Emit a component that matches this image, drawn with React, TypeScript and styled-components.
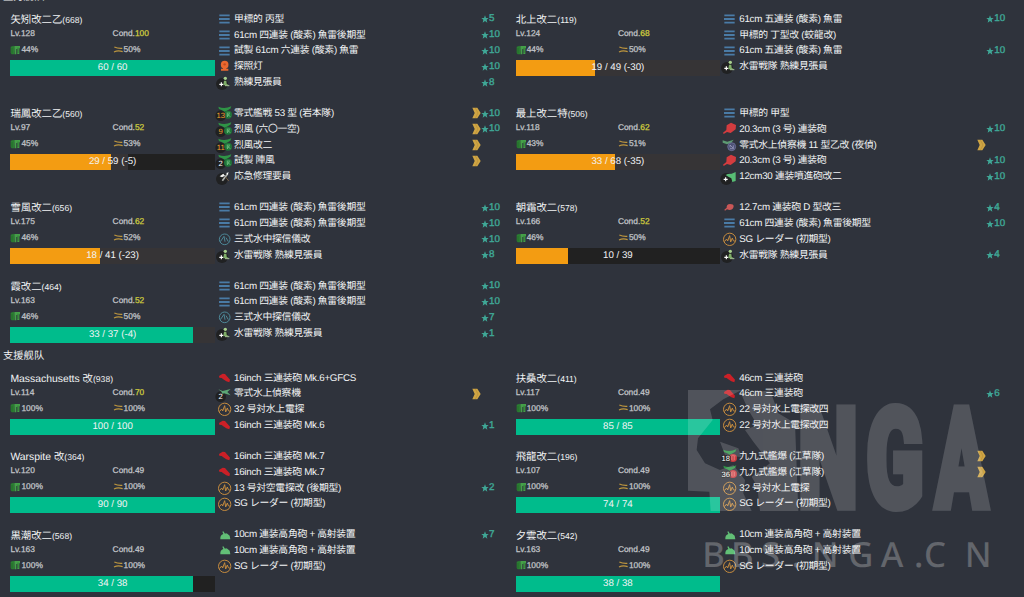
import React from "react";
import styled, { createGlobalStyle } from "styled-components";

const theme = {
  background: "#2f333c",
  text: "#f2f3f5",
  muted: "#c3c6ca",
  green: "#00bc8c",
  orange: "#f39c12",
  yellow: "#d3cf3c",
  teal: "#3fa796",
  gold: "#cfa544",
  barEmpty: "#212121",
  barLoss: "#363436",
  font: `"Liberation Sans", "Noto Sans CJK JP", sans-serif`,
};

type IconKind =
  | "torpedo"
  | "searchlight"
  | "lookout"
  | "fighter"
  | "bomber"
  | "repair"
  | "gunLarge"
  | "gunMedium"
  | "gunSmall"
  | "nightRecon"
  | "seaplane"
  | "rocket"
  | "radar"
  | "sonar"
  | "highAngle";

interface Equip {
  icon: IconKind;
  name: string;
  stars?: number;
  ace?: boolean;
  count?: number;
  full?: boolean;
}

interface Ship {
  name: string;
  id: number;
  lv: number;
  cond: number;
  fuel: number;
  ammo: number;
  hp: number;
  max: number;
  loss?: number;
  equips: Equip[];
}

const GlobalStyle = createGlobalStyle`
  body {
    margin: 0;
    background: ${theme.background};
    overflow: hidden;
  }
`;

const Page = styled.div`
  position: relative;
  width: 1024px;
  height: 597px;
  overflow: hidden;
  background: ${theme.background};
  color: ${theme.text};
  font-family: ${theme.font};
  font-size: 9.8px;
  text-rendering: geometricPrecision;
  white-space: nowrap;
`;

const Fleets = styled.div`
  margin-top: -17.7px;
`;

const FleetTitle = styled.div`
  box-sizing: border-box;
  height: 28.7px;
  padding: 2px 0 0 3px;
  font-family: "Liberation Sans", "Noto Sans CJK SC", sans-serif;
  font-size: 10.3px;
  line-height: 28.7px;
`;

const ShipGrid = styled.div`
  display: grid;
  grid-template-columns: 505.3px 505px;
  row-gap: 15px;
`;

const ShipCard = styled.div`
  display: flex;
  align-items: flex-start;
  padding-left: 10.4px;
`;

const Info = styled.div`
  width: 204.4px;
  margin-bottom: -3px;
`;

const ShipName = styled.div`
  box-sizing: border-box;
  height: 17px;
  padding-top: 1px;
  line-height: 17px;
  font-size: 10.4px;

  small {
    font-size: 8.6px;
  }
`;

const StatLine = styled.div`
  display: grid;
  grid-template-columns: 50% 50%;
  height: 16px;
  line-height: 11px;
  font-size: 8.4px;
  color: ${theme.muted};
  -webkit-text-stroke: 0.25px currentColor;
`;

const Stat = styled.div`
  display: flex;
  height: 11px;
  align-items: center;
`;

const Cond = styled.span<{ $high: boolean }>`
  color: ${(p) => (p.$high ? theme.yellow : "inherit")};
`;

const StatIcon = styled.svg`
  width: 11px;
  height: 10px;
`;

const Bar = styled.div`
  display: grid;
  height: 16px;
  background: ${theme.barEmpty};
`;

const BarTrack = styled.div`
  grid-area: 1 / 1;
  display: flex;
`;

const BarFill = styled.div<{ $color: string }>`
  background: ${(p) => p.$color};
`;

const BarLabel = styled.div`
  grid-area: 1 / 1;
  z-index: 1;
  text-align: center;
  line-height: 16px;
  font-size: 9.7px;
`;

const EquipList = styled.div`
  width: 287px;
  padding-left: 1.2px;
`;

const EquipRow = styled.div`
  display: flex;
  align-items: center;
  height: 15.85px;
  line-height: 15.85px;
`;

const EquipIcon = styled.svg`
  flex: none;
  width: 18px;
  height: 16px;
  overflow: visible;
`;

const EquipName = styled.span`
  flex: 1;
  padding-top: 1.4px;
  letter-spacing: -0.27px;
`;

const Ace = styled.svg`
  width: 9px;
  height: 12px;
`;

const Stars = styled.span`
  display: flex;
  align-items: center;
  width: 22px;
  padding-top: 0.8px;
  font-size: 9.8px;
  color: ${theme.teal};
  -webkit-text-stroke: 0.4px currentColor;

  svg {
    width: 8px;
    height: 8px;
  }
`;

const Watermark = styled.svg`
  position: absolute;
  left: 670px;
  top: 370px;
  width: 354px;
  height: 227px;
  pointer-events: none;
`;

const torp = (name: string, stars?: number): Equip => ({ icon: "torpedo", name, stars });
const radar = (name: string, stars?: number): Equip => ({ icon: "radar", name, stars });
const gun = (icon: IconKind, name: string, stars?: number): Equip => ({ icon, name, stars });

const mainFleet: Ship[] = [
  {
    name: "矢矧改二乙", id: 668, lv: 128, cond: 100, fuel: 44, ammo: 50, hp: 60, max: 60,
    equips: [
      torp("甲標的 丙型", 5),
      torp("61cm 四連装 (酸素) 魚雷後期型", 10),
      torp("試製 61cm 六連装 (酸素) 魚雷", 10),
      { icon: "searchlight", name: "探照灯", stars: 10 },
      { icon: "lookout", name: "熟練見張員", stars: 8 },
    ],
  },
  {
    name: "北上改二", id: 119, lv: 124, cond: 68, fuel: 44, ammo: 50, hp: 19, max: 49, loss: 30,
    equips: [
      torp("61cm 五連装 (酸素) 魚雷", 10),
      torp("甲標的 丁型改 (蛟龍改)"),
      torp("61cm 五連装 (酸素) 魚雷", 10),
      { icon: "lookout", name: "水雷戦隊 熟練見張員" },
    ],
  },
  {
    name: "瑞鳳改二乙", id: 560, lv: 97, cond: 52, fuel: 45, ammo: 53, hp: 29, max: 59, loss: 5,
    equips: [
      { icon: "fighter", name: "零式艦戦 53 型 (岩本隊)", stars: 10, ace: true, count: 13 },
      { icon: "fighter", name: "烈風 (六〇一空)", stars: 10, ace: true, count: 9 },
      { icon: "fighter", name: "烈風改二", ace: true, count: 11 },
      { icon: "fighter", name: "試製 陣風", ace: true, count: 2, full: true },
      { icon: "repair", name: "応急修理要員" },
    ],
  },
  {
    name: "最上改二特", id: 506, lv: 118, cond: 62, fuel: 43, ammo: 51, hp: 33, max: 68, loss: 35,
    equips: [
      torp("甲標的 甲型"),
      gun("gunMedium", "20.3cm (3 号) 連装砲", 10),
      { icon: "nightRecon", name: "零式水上偵察機 11 型乙改 (夜偵)", ace: true },
      gun("gunMedium", "20.3cm (3 号) 連装砲", 10),
      { icon: "rocket", name: "12cm30 連装噴進砲改二", stars: 10 },
    ],
  },
  {
    name: "雪風改二", id: 656, lv: 175, cond: 62, fuel: 46, ammo: 52, hp: 18, max: 41, loss: 23,
    equips: [
      torp("61cm 四連装 (酸素) 魚雷後期型", 10),
      torp("61cm 四連装 (酸素) 魚雷後期型", 10),
      { icon: "sonar", name: "三式水中探信儀改", stars: 10 },
      { icon: "lookout", name: "水雷戦隊 熟練見張員", stars: 8 },
    ],
  },
  {
    name: "朝霜改二", id: 578, lv: 166, cond: 52, fuel: 46, ammo: 50, hp: 10, max: 39,
    equips: [
      gun("gunSmall", "12.7cm 連装砲 D 型改三", 4),
      torp("61cm 四連装 (酸素) 魚雷後期型", 10),
      radar("SG レーダー (初期型)"),
      { icon: "lookout", name: "水雷戦隊 熟練見張員", stars: 4 },
    ],
  },
  {
    name: "霞改二", id: 464, lv: 163, cond: 52, fuel: 46, ammo: 50, hp: 33, max: 37, loss: 4,
    equips: [
      torp("61cm 四連装 (酸素) 魚雷後期型", 10),
      torp("61cm 四連装 (酸素) 魚雷後期型", 10),
      { icon: "sonar", name: "三式水中探信儀改", stars: 7 },
      { icon: "lookout", name: "水雷戦隊 熟練見張員", stars: 1 },
    ],
  },
];

const supportFleet: Ship[] = [
  {
    name: "Massachusetts 改", id: 938, lv: 114, cond: 70, fuel: 100, ammo: 100, hp: 100, max: 100,
    equips: [
      gun("gunLarge", "16inch 三連装砲 Mk.6+GFCS"),
      { icon: "seaplane", name: "零式水上偵察機", ace: true, count: 2, full: true },
      radar("32 号対水上電探"),
      gun("gunLarge", "16inch 三連装砲 Mk.6", 1),
    ],
  },
  {
    name: "扶桑改二", id: 411, lv: 117, cond: 49, fuel: 100, ammo: 100, hp: 85, max: 85,
    equips: [
      gun("gunLarge", "46cm 三連装砲"),
      gun("gunLarge", "46cm 三連装砲", 6),
      radar("22 号対水上電探改四"),
      radar("22 号対水上電探改四"),
    ],
  },
  {
    name: "Warspite 改", id: 364, lv: 120, cond: 49, fuel: 100, ammo: 100, hp: 90, max: 90,
    equips: [
      gun("gunLarge", "16inch 三連装砲 Mk.7"),
      gun("gunLarge", "16inch 三連装砲 Mk.7"),
      radar("13 号対空電探改 (後期型)", 2),
      radar("SG レーダー (初期型)"),
    ],
  },
  {
    name: "飛龍改二", id: 196, lv: 107, cond: 49, fuel: 100, ammo: 100, hp: 74, max: 74,
    equips: [
      { icon: "bomber", name: "九九式艦爆 (江草隊)", ace: true, count: 18, full: true },
      { icon: "bomber", name: "九九式艦爆 (江草隊)", ace: true, count: 36, full: true },
      radar("32 号対水上電探"),
      radar("SG レーダー (初期型)"),
    ],
  },
  {
    name: "黒潮改二", id: 568, lv: 163, cond: 49, fuel: 100, ammo: 100, hp: 34, max: 38,
    equips: [
      gun("highAngle", "10cm 連装高角砲 + 高射装置", 7),
      gun("highAngle", "10cm 連装高角砲 + 高射装置"),
      radar("SG レーダー (初期型)"),
    ],
  },
  {
    name: "夕雲改二", id: 542, lv: 163, cond: 49, fuel: 100, ammo: 100, hp: 38, max: 38,
    equips: [
      gun("highAngle", "10cm 連装高角砲 + 高射装置"),
      gun("highAngle", "10cm 連装高角砲 + 高射装置"),
      radar("SG レーダー (初期型)"),
    ],
  },
];

const plane = <path d="M7 5 Q25 13 46 4 L43 11 Q33 17 26 20 Q19 16 9 12Z" fill="#2f9446" />;

const shapes: Record<IconKind, React.ReactNode> = {
  torpedo: <path d="M10 13H41M9 24H41M10 35H41" stroke="#4a7ba6" strokeWidth="5.4" />,
  searchlight: (
    <g fill="#e9682f">
      <circle cx="26" cy="20" r="11.5" />
      <path d="M21 27H31V32H37V38H15V32H21Z" />
      <circle cx="26" cy="19" r="3.5" fill="#c24a20" />
    </g>
  ),
  lookout: (
    <g>
      <circle cx="18" cy="30" r="18" fill="#202122" />
      <path d="M10 31H22M16 25V37" stroke="#fff" strokeWidth="3.4" />
      <circle cx="28" cy="13" r="5" fill="#a9d18e" />
      <path d="M24 20H31L32 29L38 34H22Z" fill="#7fae68" />
      <path d="M27 35H40" stroke="#a9c498" strokeWidth="3" />
    </g>
  ),
  fighter: (
    <g>
      {plane}
      <circle cx="36" cy="29" r="12" fill="#1f7539" />
      <path d="M32 24H42M34 24V36M32 30H41M40 25L34 36M39 31L43 36" stroke="#7cc98a" strokeWidth="1.8" />
    </g>
  ),
  bomber: (
    <g>
      {plane}
      <circle cx="36" cy="30" r="12" fill="#c8373c" />
      <path d="M32 24H41V36H32ZM32 30H41" fill="none" stroke="#ea8d8a" strokeWidth="1.8" />
    </g>
  ),
  repair: (
    <g>
      <circle cx="18" cy="30" r="18" fill="#202122" />
      <path d="M19 35L35 14" stroke="#aeb1ad" strokeWidth="5" />
      <path d="M11 22L22 14L27 20L18 25Z" fill="#f4f4f2" />
      <path d="M31 12L38 10L35 18Z" fill="#fff" />
      <path d="M29 24L38 36" stroke="#77604a" strokeWidth="3" />
    </g>
  ),
  gunLarge: <path d="M9 18L20 11L27 12L42 29L40 37L31 34L24 29L17 24L10 23Z" fill="#cb2027" />,
  gunMedium: <path d="M6 35L16 27L17 13L30 5L45 12L44 25L29 36L18 33L8 39Z" fill="#d33c3f" />,
  gunSmall: <path d="M10 32L17 26Q16 16 27 15Q38 15 38 22Q37 33 25 33L18 31L12 35Z" fill="#c95757" />,
  nightRecon: (
    <g>
      <path d="M5 10L19 14L38 8L31 17L18 22L5 17Z" fill="#5d9a72" />
      <circle cx="32" cy="29" r="12" fill="#4d5176" stroke="#777ba6" strokeWidth="2" />
      <path d="M27 31V24L37 34V25M27 35H38" fill="none" stroke="#a6a7ca" strokeWidth="2" />
    </g>
  ),
  seaplane: (
    <path d="M7 10L20 15L44 9L34 18L44 28L24 22L10 29L18 19Z" fill="#5da675" />
  ),
  rocket: (
    <g>
      <circle cx="16" cy="30" r="18" fill="#202122" />
      <path d="M8 31H20M14 25V37" stroke="#fff" strokeWidth="3.4" />
      <path d="M14 18L20 15L32 14L44 9V36L34 39L31 28L22 23Z" fill="#58bd75" />
    </g>
  ),
  radar: (
    <g fill="none" stroke="#c58b3e">
      <circle cx="26" cy="25" r="18.5" strokeWidth="3" />
      <path d="M10 32L17 24L20 30L26 14L29 33L34 21L37 29L42 31" strokeWidth="3" />
    </g>
  ),
  sonar: (
    <g fill="none" stroke="#4f8d9d">
      <circle cx="26" cy="25" r="16" strokeWidth="2.8" />
      <path d="M13 32L24 16L27 32M30 20L37 32" strokeWidth="2.8" />
    </g>
  ),
  highAngle: (
    <path d="M13 37Q12 24 22 21L19 14L22 13L27 20Q30 18 34 20L41 26L43 37Z" fill="#62bf76" />
  ),
};

function Icon({ equip }: { equip: Equip }) {
  return (
    <EquipIcon viewBox="0 0 54 48">
      {equip.icon === "seaplane" || equip.icon === "fighter" ? (
        <circle cx="14" cy="32" r="16" fill="#202122" />
      ) : null}
      {shapes[equip.icon]}
      {equip.count !== undefined && (
        <text
          x="14"
          y="40"
          fontSize="23"
          textAnchor="middle"
          stroke="#222"
          strokeWidth="5"
          paintOrder="stroke"
          fill={equip.full ? "#fff" : "#f0a02c"}
        >
          {equip.count}
        </text>
      )}
    </EquipIcon>
  );
}

function HpBar({ hp, max, loss = 0 }: { hp: number; max: number; loss?: number }) {
  const ratio = hp / max;
  return (
    <Bar>
      <BarTrack>
        <BarFill
          $color={ratio > 0.5 ? theme.green : theme.orange}
          style={{ width: `${ratio * 100}%` }}
        />
        <BarFill $color={theme.barLoss} style={{ width: `${(loss / max) * 100}%` }} />
      </BarTrack>
      <BarLabel>
        {hp} / {max}
        {loss > 0 && ` (-${loss})`}
      </BarLabel>
    </Bar>
  );
}

function ShipView({ ship }: { ship: Ship }) {
  return (
    <ShipCard>
      <Info>
        <ShipName>
          {ship.name}
          <small>({ship.id})</small>
        </ShipName>
        <StatLine>
          <Stat>Lv.{ship.lv}</Stat>
          <Stat>
            Cond.<Cond $high={ship.cond > 49}>{ship.cond}</Cond>
          </Stat>
        </StatLine>
        <StatLine>
          <Stat>
            <StatIcon viewBox="0 0 33 30">
              <path d="M2 5L11 2L13 7V28H5L2 24Z" fill="#2b7d32" />
              <path d="M13 3H30V10H28V27H22V12H19V28H14Z" fill="#45a049" />
              <path d="M6 9V25M24 8V24" stroke="#236629" strokeWidth="2" />
            </StatIcon>
            {ship.fuel}%
          </Stat>
          <Stat>
            <StatIcon viewBox="0 0 33 30">
              <path d="M4 6Q14 11 28 10M3 21Q15 15 29 20" fill="none" stroke="#bd963f" strokeWidth="3.6" />
            </StatIcon>
            {ship.ammo}%
          </Stat>
        </StatLine>
        <HpBar hp={ship.hp} max={ship.max} loss={ship.loss} />
      </Info>
      <EquipList>
        {ship.equips.map((equip, i) => (
          <EquipRow key={i}>
            <Icon equip={equip} />
            <EquipName>{equip.name}</EquipName>
            {equip.ace && (
              <Ace viewBox="0 0 27 36">
                <path d="M1 2H16L26 18L16 34H1L8 18Z" fill={theme.gold} />
                <path d="M10 3L18 18L10 33" fill="none" stroke="#b58c38" strokeWidth="2" />
              </Ace>
            )}
            <Stars>
              {equip.stars && (
                <>
                  <svg viewBox="0 0 24 24">
                    <path d="M12 1L15 9H23L17 14L19 23L12 18L5 23L7 14L1 9H9Z" fill="currentColor" />
                  </svg>
                  {equip.stars}
                </>
              )}
            </Stars>
          </EquipRow>
        ))}
      </EquipList>
    </ShipCard>
  );
}

function Fleet({ title, ships }: { title: string; ships: Ship[] }) {
  return (
    <>
      <FleetTitle>{title}</FleetTitle>
      <ShipGrid>
        {ships.map((ship) => (
          <ShipView key={ship.id} ship={ship} />
        ))}
      </ShipGrid>
    </>
  );
}

function App() {
  return (
    <Page>
      <GlobalStyle />
      <Fleets>
        <Fleet title="主力舰队" ships={mainFleet} />
        <Fleet title="支援舰队" ships={supportFleet} />
      </Fleets>
      <Watermark viewBox="0 0 1062 681">
        <g
          opacity="0.16"
          fill="#fff"
          stroke="#fff"
          strokeWidth="22"
          fontFamily="Roboto, sans-serif"
          fontWeight="900"
          fontSize="418"
        >
          <path
            stroke="none"
            fillRule="evenodd"
            d="M54 60H215L160 88L120 118L128 150L84 205L80 240L105 280L150 300L190 285L225 330L220 370L245 423H122L118 365L54 362Z
              M215 75L300 60L325 130L375 160L385 423H270L262 350L245 320L300 280L250 215L225 180L262 165L235 120Z
              M150 215L205 235L215 262L165 255Z"
          />
          <text x="384" y="412" textLength="180" lengthAdjust="spacingAndGlyphs">N</text>
          <text x="588" y="412" textLength="174" lengthAdjust="spacingAndGlyphs">G</text>
          <text x="796" y="412" textLength="158" lengthAdjust="spacingAndGlyphs">A</text>
        </g>
        <text
          y="592"
          x="97 183 273 365 425 535 632 732 762 884"
          fill="#fff"
          fillOpacity="0.25"
          fontFamily="'Noto Sans', sans-serif"
          fontWeight="500"
          fontSize="104"
        >
          BBS.NGA.CN
        </text>
      </Watermark>
    </Page>
  );
}

export default App;
